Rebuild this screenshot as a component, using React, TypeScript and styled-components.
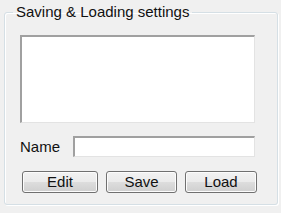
import styled, { createGlobalStyle } from "styled-components";

const Global = createGlobalStyle`
  html, body {
    margin: 0;
    padding: 0;
    background: #f0f0f0;
  }
  body {
    width: 281px;
    height: 213px;
    overflow: hidden;
    font-family: "Liberation Sans", Arial, sans-serif;
    font-size: 15px;
    color: #000;
  }
`;

function App() {
  return (
    <>
      <Global />
      <Page>
        <Group>
          <Caption>Saving &amp; Loading settings</Caption>
          <ListBox />
          <NameRow>
            <Label>Name</Label>
            <TextBox type="text" />
          </NameRow>
          <Buttons>
            <Button $w={76}>Edit</Button>
            <Button $w={71}>Save</Button>
            <Button $w={72}>Load</Button>
          </Buttons>
        </Group>
      </Page>
    </>
  );
}

export default App;

const Page = styled.div`
  padding: 4px 0 0 4px;
`;

const Group = styled.fieldset`
  box-sizing: border-box;
  width: 273px;
  height: 201px;
  margin: 0;
  padding: 0 20px 0 15px;
  border: 1px solid #d5dfe5;
  border-radius: 3px;
  box-shadow: inset 1px 1px 0 #fff, 1px 1px 0 #fff;
  display: flex;
  flex-direction: column;
`;

const Caption = styled.legend`
  margin-left: -7px;
  padding: 0 3px;
  line-height: 16px;
  font-size: 15px;
  color: #111;
`;

const ListBox = styled.div`
  box-sizing: border-box;
  width: 235px;
  height: 88px;
  margin-top: 15px;
  background: #fff;
  border-top: 2px solid #a0a0a0;
  border-left: 2px solid #a0a0a0;
  border-right: 1px solid #e3e3e3;
  border-bottom: 1px solid #e3e3e3;
`;

const NameRow = styled.div`
  display: flex;
  align-items: center;
  margin-top: 13px;
`;

const Label = styled.span`
  width: 53px;
  font-size: 15px;
  color: #111;
`;

const TextBox = styled.input`
  box-sizing: border-box;
  width: 182px;
  height: 21px;
  margin: 0;
  padding: 0 3px;
  background: #fff;
  border-top: 2px solid #a0a0a0;
  border-left: 2px solid #a0a0a0;
  border-right: 1px solid #e3e3e3;
  border-bottom: 1px solid #e3e3e3;
  outline: none;
`;

const Buttons = styled.div`
  display: flex;
  gap: 8px;
  margin-top: 14px;
  padding-left: 2px;
`;

const Button = styled.button<{ $w: number }>`
  box-sizing: border-box;
  width: ${(p) => p.$w}px;
  height: 22px;
  margin: 0;
  padding: 0;
  font-family: "Liberation Sans", Arial, sans-serif;
  font-size: 15px;
  line-height: 18px;
  color: #111;
  border: 1px solid #707070;
  border-radius: 3px;
  background: linear-gradient(#f2f2f2 0%, #ebebeb 48%, #dddddd 52%, #cfcfcf 100%);
  box-shadow: inset 0 0 0 1px #fcfcfc;
`;
